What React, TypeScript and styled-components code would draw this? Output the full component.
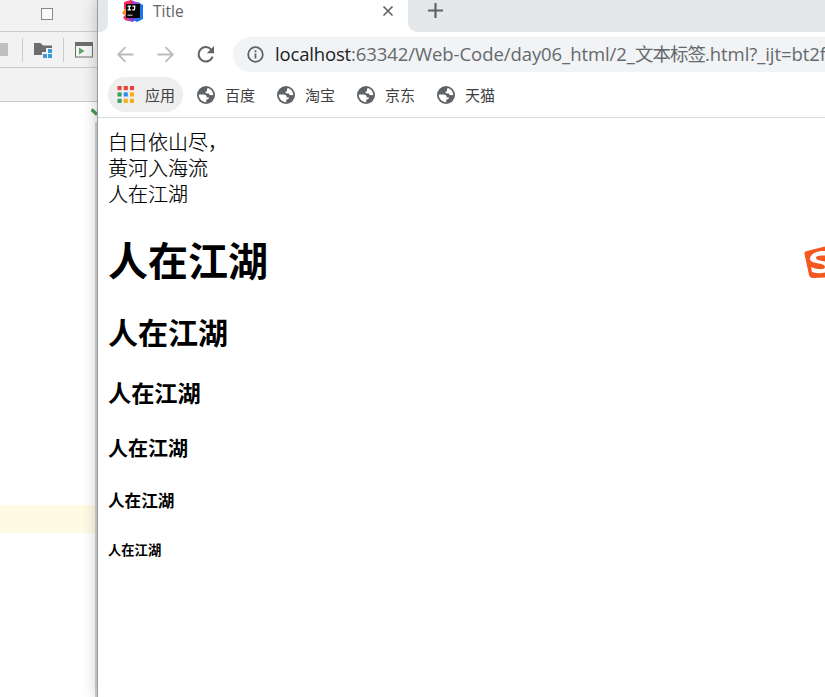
import React from "react";
import styled, { createGlobalStyle } from "styled-components";

const GlobalStyle = createGlobalStyle`
  *, *::before, *::after { box-sizing: border-box; }
  html, body { margin: 0; padding: 0; background: #fff; overflow: hidden; }
`;

const uiFont = `"Open Sans", "Noto Sans CJK SC", sans-serif`;

const Desktop = styled.div`
  display: grid;
  grid-template-columns: 97px 728px;
  width: 825px;
  height: 697px;
  overflow: hidden;
`;

/* IDE window behind the browser */
const Ide = styled.div`
  display: flex;
  flex-direction: column;
  min-width: 0;
  overflow: hidden;
`;
const IdeTitle = styled.div`
  height: 32px;
  padding: 7px 0 0 40px;
  background: #f1f1f1;
  border-bottom: 1px solid #cbcbcb;
  line-height: 0;
`;
const IdeToolbar = styled.div`
  display: flex;
  align-items: center;
  height: 36px;
  background: #f2f2f2;
  border-bottom: 1px solid #cbcbcb;
  svg { flex: none; }
`;
const StopButton = styled.div`
  width: 8px;
  height: 13px;
  background: #bfbfbf;
`;
const Separator = styled.div<{ $left: number; $right: number }>`
  width: 1px;
  height: 24px;
  margin: 0 ${(p) => p.$right}px 0 ${(p) => p.$left}px;
  background: #cbcbcb;
`;
const IdeTabs = styled.div`
  height: 34px;
  background: #f2f2f2;
  border-bottom: 1px solid #c8c8c8;
`;
const Editor = styled.div`
  flex: 1;
  display: grid;
  grid-template-columns: 95px 2px;
  grid-template-rows: 20px 383px 28px 1fr;
`;
const InspectionMark = styled.div`
  grid-column: 1 / 3;
  display: flex;
  justify-content: flex-end;
  padding-top: 5px;
`;
const CurrentLine = styled.div`
  grid-column: 1;
  grid-row: 3;
  background: #fffae3;
`;
const ErrorStripe = styled.div`
  grid-column: 2;
  grid-row: 2 / 5;
  background: #d6d6d6;
`;

/* Browser window */
const Browser = styled.div`
  position: relative;
  display: flex;
  flex-direction: column;
  min-width: 0;
  background: #fff;
  border-left: 1px solid #9b9b9b;
  box-shadow: 0 0 14px rgba(0, 0, 0, 0.24);
  font-family: ${uiFont};
`;
const TabStrip = styled.div`
  display: grid;
  grid-template-columns: 10px 300px 1fr;
  height: 32px;
`;
const StripEdge = styled.div`
  background: #e4e8eb;
  border-bottom-right-radius: 8px;
`;
const StripRest = styled.div`
  padding: 2px 0 0 19px;
  background: #e4e8eb;
  border-bottom-left-radius: 9px;
  line-height: 0;
`;
const Tab = styled.div`
  display: flex;
  align-items: center;
  height: 22px;
  padding: 0 13px 0 14px;
`;
const TabTitle = styled.span`
  flex: 1;
  margin-left: 9px;
  color: #606368;
  font-size: 15.5px;
  line-height: 22px;
`;
const Toolbar = styled.div`
  display: flex;
  align-items: center;
  height: 45px;
  padding-left: 17px;
`;
const NavButton = styled.span`
  width: 40px;
  line-height: 0;
`;
const Omnibox = styled.div`
  display: flex;
  align-items: center;
  flex: 1;
  min-width: 0;
  height: 35px;
  margin-left: -2px;
  padding-left: 14px;
  background: #f1f3f4;
  border-radius: 18px 0 0 18px;
  overflow: hidden;
  svg { flex: none; }
`;
const Address = styled.div`
  display: flex;
  margin-left: 11px;
  padding-bottom: 2px;
  font-size: 18.5px;
  line-height: 33px;
  white-space: nowrap;
`;
const UrlPart = styled.span<{ $width: number; $spacing: number; $dark?: boolean }>`
  flex: none;
  width: ${(p) => p.$width}px;
  letter-spacing: ${(p) => p.$spacing}px;
  color: ${(p) => (p.$dark ? "#202124" : "#66696d")};
`;
const Bookmarks = styled.div`
  display: flex;
  height: 41px;
  padding-left: 10px;
  border-bottom: 1px solid #d9dbde;
`;
const Bookmark = styled.div<{ $active?: boolean }>`
  display: flex;
  align-items: center;
  gap: ${(p) => (p.$active ? 11 : 9)}px;
  width: ${(p) => (p.$active ? 75 : 80)}px;
  height: 35px;
  margin-right: ${(p) => (p.$active ? 5 : 0)}px;
  padding-left: ${(p) => (p.$active ? 9 : 8)}px;
  border-radius: 18px;
  background: ${(p) => (p.$active ? "#eeeeee" : "transparent")};
  color: #3c4043;
  font-size: 15px;
  line-height: 33px;
  white-space: nowrap;
  svg { flex: none; }
`;
const BookmarkLabel = styled.span`
  padding-top: 2px;
`;
const Page = styled.main`
  flex: 1;
  padding: 11px 10px;
  color: #000;
  font-family: "Noto Sans CJK SC", sans-serif;
`;
const Verse = styled.div`
  font-size: 20px;
  line-height: 26px;
  font-weight: 300;
  -webkit-text-stroke: 0.2px #000;
`;
const Heading = styled.div<{ $size: number; $height: number; $gap: number }>`
  height: ${(p) => p.$height}px;
  margin: ${(p) => p.$gap}px 0 0;
  font-size: ${(p) => p.$size}px;
  line-height: ${(p) => p.$height}px;
  font-weight: 700;
`;
const InputMethodBadge = styled.div`
  position: absolute;
  top: 244px;
  right: 0;
  width: 22px;
  height: 36px;
  overflow: hidden;
`;

const headings = [
  { as: "h1", size: 40, height: 53, gap: 26 },
  { as: "h2", size: 30, height: 40, gap: 25 },
  { as: "h3", size: 23.2, height: 31, gap: 26 },
  { as: "h4", size: 20, height: 26, gap: 27 },
  { as: "h5", size: 16.6, height: 22, gap: 28 },
  { as: "h6", size: 13.3, height: 18, gap: 30 },
] as const;

const appColors = ["#ea4335", "#ea4335", "#ea4335", "#34a060", "#2b8cf0", "#f6ad13", "#34a060", "#f6ad13", "#f6ad13"];

const AppsIcon = () => (
  <svg width="17" height="17" viewBox="0 0 17 17">
    {appColors.map((c, i) => (
      <rect key={i} x={0.5 + (i % 3) * 6.2} y={Math.floor(i / 3) * 6.4} width="4.1" height="4.1" fill={c} />
    ))}
  </svg>
);

const Globe = () => (
  <svg width="20" height="20" viewBox="0 0 20 20">
    <circle cx="10" cy="10" r="9" fill="#5f6368" />
    <path d="M11.6 2.9 C14.9 3.6 17.2 6.5 17.2 10 L14.8 10.2 C13.6 10.2 13 9.6 12.9 8.6 L9.8 8.3 L9.4 6.6 L11 6.4 L10.9 4.9 Z" fill="#fff" />
    <path d="M2.8 9.6 H7.4 C9.7 9.6 10.8 10.7 10.8 12.6 H13 C13 14.1 11.8 14.6 10.2 14.6 V17.2 C6 17.2 2.8 14 2.8 9.6 Z" fill="#fff" />
  </svg>
);

const IdeaLogo = () => (
  <svg width="22" height="22" viewBox="0 0 22 22">
    <path d="M2 2 L9 0 L13 3 L11 12 L2 9 Z" fill="#fb2859" />
    <path d="M0 13 L3 9 L8 14 L5 17 Z" fill="#fc8726" />
    <path d="M12 3 L16 2 L21 5 L21 19 L15 22 L8 18 Z" fill="#1878f2" />
    <path d="M9 0 L14 2 L19 5 L11 8 Z" fill="#a341cf" />
    <path d="M2 16 L7 14 L15 18 L11 22 L3 20 Z" fill="#7b45d8" />
    <path d="M1 17 L5 15 L8 21 L3 20 Z" fill="#ed316d" />
    <rect x="4" y="4" width="14" height="14" fill="#050505" />
    <path d="M5.5 6.2h3.6M7.3 6v4M5.5 9.8h3.6M10.4 6.2h3M12.6 6v2.8c0 1.1-1.2 1.4-2.3.8" fill="none" stroke="#fff" strokeWidth="1.3" />
    <path d="M5.5 15.2h5" stroke="#ccc" strokeWidth="1.1" />
  </svg>
);

export default function App() {
  return (
    <>
      <GlobalStyle />
      <Desktop>
        <Ide>
          <IdeTitle>
            <svg width="14" height="14" viewBox="0 0 14 14">
              <rect x="1.5" y="1.5" width="11" height="11" fill="#fafafa" stroke="#8b8b8b" />
            </svg>
          </IdeTitle>
          <IdeToolbar>
            <StopButton />
            <Separator $left={14} $right={11} />
            <svg width="18" height="17" viewBox="0 0 18 17">
              <path d="M0 2h6.5l2.5 2.5h9V14H0z" fill="#6d6d6d" />
              <path d="M8 17v-6h4V7h6v10z" fill="#f2f2f2" />
              <path d="M14 8h4v4h-4zM9 13h4v4H9zM14 13h4v4h-4z" fill="#389fd6" />
            </svg>
            <Separator $left={11} $right={11} />
            <svg width="18" height="16" viewBox="0 0 18 16">
              <rect x=".5" y=".5" width="17" height="14.5" fill="#f5f5f5" stroke="#6e6e6e" />
              <path d="M0 0h18v4H0z" fill="#6e6e6e" />
              <path d="M4 5.5v7l5.5-3.5z" fill="#59a869" />
            </svg>
          </IdeToolbar>
          <IdeTabs />
          <Editor>
            <InspectionMark>
              <svg width="6" height="10" viewBox="0 0 6 10">
                <path d="M0.5 2.5 L6 7.5" fill="none" stroke="#499c54" strokeWidth="3.2" />
              </svg>
            </InspectionMark>
            <CurrentLine />
            <ErrorStripe />
          </Editor>
        </Ide>

        <Browser>
          <TabStrip>
            <StripEdge />
            <Tab>
              <IdeaLogo />
              <TabTitle>Title</TabTitle>
              <svg width="14" height="14" viewBox="0 0 14 14">
                <path d="M2.5 2.5l9 9M11.5 2.5l-9 9" stroke="#5f6368" strokeWidth="1.7" />
              </svg>
            </Tab>
            <StripRest>
              <svg width="16" height="16" viewBox="0 0 16 16">
                <path d="M8.5 1v15M1 8.5h15" stroke="#5f6368" strokeWidth="2.2" />
              </svg>
            </StripRest>
          </TabStrip>

          <Toolbar>
            <NavButton>
              <svg width="20" height="20" viewBox="0 0 20 20">
                <path d="M18.5 9.5H3.5M10.5 2.2L3.2 9.5l7.3 7.3" fill="none" stroke="#b9bbbd" strokeWidth="1.8" />
              </svg>
            </NavButton>
            <NavButton>
              <svg width="20" height="20" viewBox="0 0 20 20">
                <path d="M2.5 9.5h15M10.5 2.2l7.3 7.3-7.3 7.3" fill="none" stroke="#b9bbbd" strokeWidth="1.8" />
              </svg>
            </NavButton>
            <NavButton>
              <svg width="20" height="20" viewBox="0 0 20 20">
                <path d="M17.6 11.6a7.2 7.2 0 1 1-1.5-7.2" fill="none" stroke="#5f6368" strokeWidth="2.1" />
                <path d="M19 1v7.2h-7.2z" fill="#5f6368" />
              </svg>
            </NavButton>
            <Omnibox>
              <svg width="17" height="17" viewBox="0 0 17 17">
                <circle cx="8.5" cy="8.5" r="7.3" fill="none" stroke="#5f6368" strokeWidth="1.8" />
                <path d="M8.5 7.5v5M8.5 4.3v1.9" stroke="#5f6368" strokeWidth="1.8" />
              </svg>
              <Address>
                <UrlPart $width={76} $spacing={-0.17} $dark>localhost</UrlPart>
                <UrlPart $width={284} $spacing={-0.07}>:63342/Web-Code/day06_html/2_</UrlPart>
                <UrlPart $width={70} $spacing={-1}>文本标签</UrlPart>
                <UrlPart $width={130} $spacing={-0.07}>.html?_ijt=bt2f</UrlPart>
              </Address>
            </Omnibox>
          </Toolbar>

          <Bookmarks>
            <Bookmark $active>
              <AppsIcon />
              <BookmarkLabel>应用</BookmarkLabel>
            </Bookmark>
            {["百度", "淘宝", "京东", "天猫"].map((name) => (
              <Bookmark key={name}>
                <Globe />
                <BookmarkLabel>{name}</BookmarkLabel>
              </Bookmark>
            ))}
          </Bookmarks>

          <Page>
            <Verse>
              白日依山尽，
              <br />
              黄河入海流
              <br />
              人在江湖
            </Verse>
            {headings.map((h) => (
              <Heading key={h.as} as={h.as} $size={h.size} $height={h.height} $gap={h.gap}>
                人在江湖
              </Heading>
            ))}
          </Page>
          <InputMethodBadge>
            <svg width="36" height="36" viewBox="0 0 36 36">
              <path d="M4 7 Q1 7.5 1.5 10 L6 31 Q7 34.5 11 34 L36 33 V-1 Z" fill="#f4571f" />
              <path d="M26 8 C17 5 8 9 7 14 C6 21 22 18 22 23 C22 26 15 26 8 23 L9 28 C18 31 29 28 29 23 C29 16 13 18 13 14 C13 11 20 11 26 12 Z" fill="#fff" />
            </svg>
          </InputMethodBadge>
        </Browser>
      </Desktop>
    </>
  );
}
